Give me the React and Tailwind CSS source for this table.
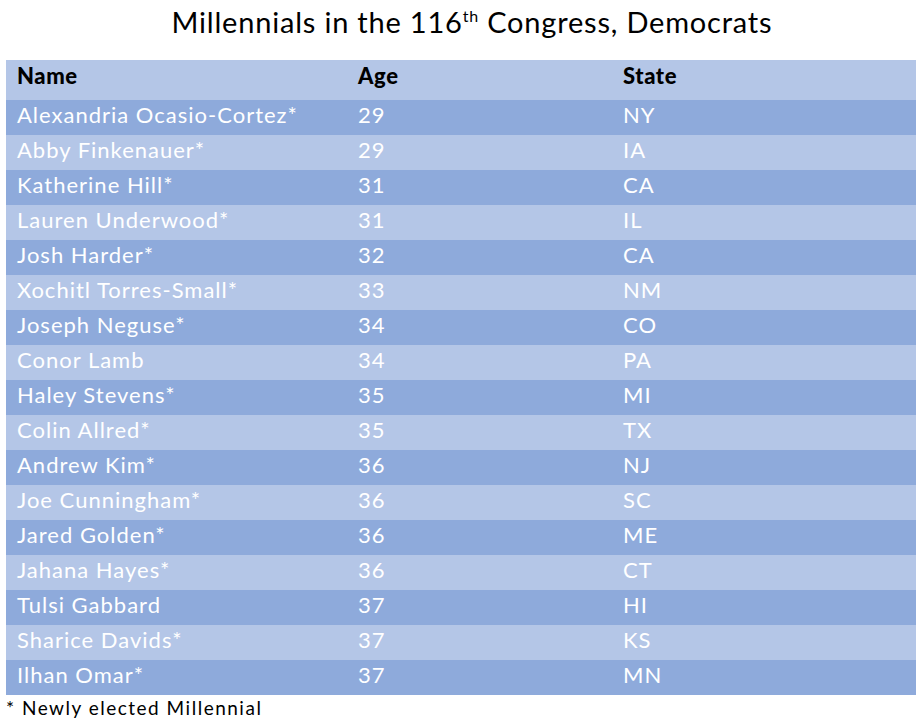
import React from 'react'

const rows = [
  ['Alexandria Ocasio-Cortez*', '29', 'NY'],
  ['Abby Finkenauer*', '29', 'IA'],
  ['Katherine Hill*', '31', 'CA'],
  ['Lauren Underwood*', '31', 'IL'],
  ['Josh Harder*', '32', 'CA'],
  ['Xochitl Torres-Small*', '33', 'NM'],
  ['Joseph Neguse*', '34', 'CO'],
  ['Conor Lamb', '34', 'PA'],
  ['Haley Stevens*', '35', 'MI'],
  ['Colin Allred*', '35', 'TX'],
  ['Andrew Kim*', '36', 'NJ'],
  ['Joe Cunningham*', '36', 'SC'],
  ['Jared Golden*', '36', 'ME'],
  ['Jahana Hayes*', '36', 'CT'],
  ['Tulsi Gabbard', '37', 'HI'],
  ['Sharice Davids*', '37', 'KS'],
  ['Ilhan Omar*', '37', 'MN'],
]

const App = () => {
  return (
    <div className="w-[922px] h-[722px] bg-white overflow-hidden font-['Lato','Noto_Sans',sans-serif]">
      {/* title */}
      <h1 className="h-[60px] pt-[4px] pl-[22px] text-center text-[29px] leading-[35px] tracking-[0.8px] text-black">
        Millennials in the 116<span className="text-[16px] relative -top-[11px] leading-none">th</span> Congress, Democrats
      </h1>

      <div className="mx-[6px] w-[910px]">
        <div className="h-[40px] pt-[3px] flex items-start bg-[#b4c6e7] text-black font-black text-[22px] leading-[25px] tracking-[0.6px]">
          <div className="w-[341px] pl-[11px]">Name</div>
          <div className="w-[265px] pl-[11px]">Age</div>
          <div className="flex-1 pl-[11px]">State</div>
        </div>
        {rows.map((r, i) => (
          <div
            key={i}
            className={`h-[35px] pt-[2px] flex items-start text-white text-[22px] leading-[26px] tracking-[1px] ${i % 2 === 0 ? 'bg-[#8eaadb]' : 'bg-[#b4c6e7]'}`}
          >
            <div className="w-[341px] pl-[11px]">{r[0]}</div>
            <div className="w-[265px] pl-[11px]">{r[1]}</div>
            <div className="flex-1 pl-[11px]">{r[2]}</div>
          </div>
        ))}
      </div>

      <div className="pl-[6px] pt-[1px] text-[19px] leading-[23px] tracking-[1.5px] text-black">* Newly elected Millennial</div>
    </div>
  )
}

export default App
